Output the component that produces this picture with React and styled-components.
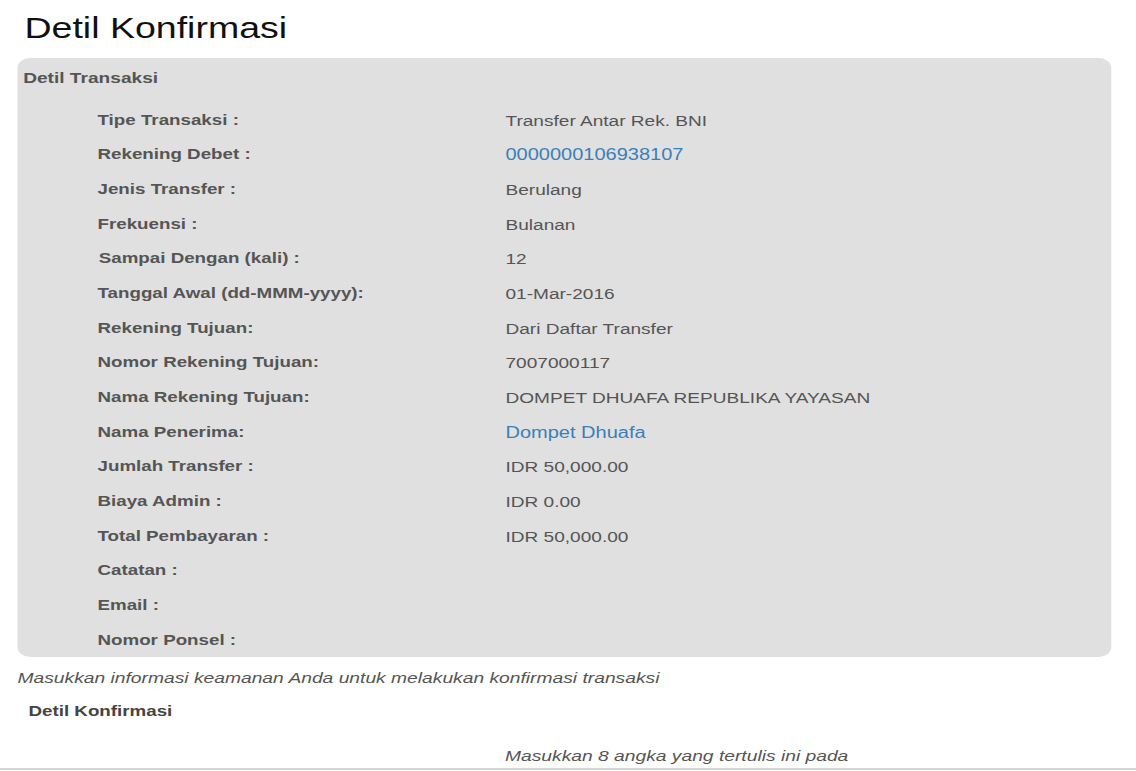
import React from "react";
import styled, { createGlobalStyle } from "styled-components";

const Global = createGlobalStyle`
  html, body { margin: 0; padding: 0; background: #fff; overflow: hidden; }
  body { font-family: "Liberation Sans", Arial, sans-serif; }
`;

/* The reference is rendered horizontally stretched; the whole page is drawn at
   its natural width and widened by the same factor. */
const Stage = styled.div`
  width: 909px;
  transform: scaleX(1.25);
  transform-origin: 0 0;
`;

const Page = styled.div`
  padding: 10px 20px 0 14px;
  color: #555;
`;

const Title = styled.h1`
  margin: 0 0 12px 0;
  padding-left: 5.6px;
  font-size: 30px;
  line-height: 36px;
  font-weight: normal;
  color: #111;
`;

const Panel = styled.section`
  background: #e0e0e0;
  border-radius: 10px;
  padding: 10px 0 0 4.5px;
  width: 875px;
  box-sizing: border-box;
  height: 599px;
`;

const PanelTitle = styled.div`
  font-size: 15.3px;
  line-height: 20px;
  font-weight: bold;
  color: #555;
  margin-bottom: 15.7px;
`;

const Rows = styled.div`
  display: grid;
  grid-template-columns: 326.4px 1fr;
  grid-auto-rows: 34.67px;
  padding-left: 59.5px;
`;

const Label = styled.div`
  font-size: 15px;
  line-height: 32px;
  font-weight: bold;
  color: #555;
  white-space: nowrap;
  padding-left: ${(p) => p.$indent || 0}px;
`;

const Value = styled.div`
  font-size: ${(p) => (p.$link ? "16px" : "15.25px")};
  line-height: 34.67px;
  color: ${(p) => (p.$link ? "#3a7fb9" : "#555")};
  white-space: nowrap;
`;

const Note = styled.p`
  margin: 11px 0 0 0;
  font-size: 15.4px;
  line-height: 20px;
  font-style: italic;
  color: #555;
`;

const SubTitle = styled.div`
  margin-top: 12.8px;
  padding-left: 8.8px;
  font-size: 15px;
  line-height: 20px;
  font-weight: bold;
  color: #444;
`;

const CaptchaHint = styled.div`
  margin-top: 25px;
  padding-left: 390px;
  font-size: 15.4px;
  line-height: 20px;
  font-style: italic;
  color: #555;
  padding-bottom: 2px;
`;

const Rule = styled.div`
  border-top: 2px solid #d6d6d6;
  margin-left: -14px;
  margin-right: -20px;
`;

const rows = [
  ["Tipe Transaksi :", "Transfer Antar Rek. BNI"],
  ["Rekening Debet :", "0000000106938107", true],
  ["Jenis Transfer :", "Berulang"],
  ["Frekuensi :", "Bulanan"],
  ["Sampai Dengan (kali) :", "12", false, 1],
  ["Tanggal Awal (dd-MMM-yyyy):", "01-Mar-2016"],
  ["Rekening Tujuan:", "Dari Daftar Transfer"],
  ["Nomor Rekening Tujuan:", "7007000117"],
  ["Nama Rekening Tujuan:", "DOMPET DHUAFA REPUBLIKA YAYASAN"],
  ["Nama Penerima:", "Dompet Dhuafa", true],
  ["Jumlah Transfer :", "IDR 50,000.00"],
  ["Biaya Admin :", "IDR 0.00"],
  ["Total Pembayaran :", "IDR 50,000.00"],
  ["Catatan :", ""],
  ["Email :", ""],
  ["Nomor Ponsel :", ""],
];

export default function App() {
  return (
    <>
      <Global />
      <Stage>
        <Page>
          <Title>Detil Konfirmasi</Title>
          <Panel>
            <PanelTitle>Detil Transaksi</PanelTitle>
            <Rows>
              {rows.map(([label, value, link, indent]) => (
                <React.Fragment key={label}>
                  <Label $indent={indent}>{label}</Label>
                  <Value $link={link}>{value}</Value>
                </React.Fragment>
              ))}
            </Rows>
          </Panel>
          <Note>Masukkan informasi keamanan Anda untuk melakukan konfirmasi transaksi</Note>
          <SubTitle>Detil Konfirmasi</SubTitle>
          <CaptchaHint>Masukkan 8 angka yang tertulis ini pada</CaptchaHint>
          <Rule />
        </Page>
      </Stage>
    </>
  );
}
